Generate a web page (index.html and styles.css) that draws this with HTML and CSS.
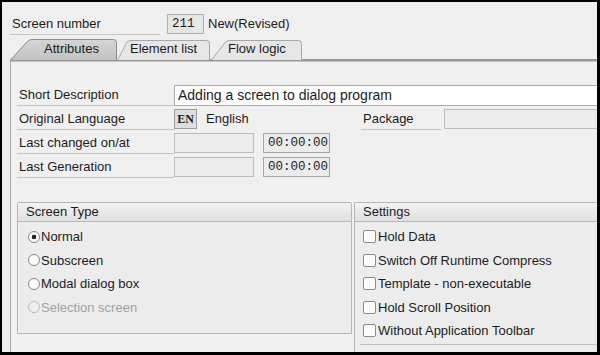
FILE: index.html
```html
<!DOCTYPE html>
<html lang="en">
<head>
  <meta charset="UTF-8" />
  <title>Screen Painter - Attributes</title>
  <link rel="stylesheet" href="styles.css">
</head>
<body>

  <div class="window">

    <div class="screen-row">
      <span class="line-label top-label">Screen number</span>
      <span class="code-box">211</span>
      <span class="status">New(Revised)</span>
    </div>

    <div class="tabs">
      <div class="tab tab-attr active">
        <svg class="tab-shape" viewBox="0 0 107 21" preserveAspectRatio="none">
          <defs>
            <linearGradient id="activeFill" x1="0" y1="0" x2="0" y2="1">
              <stop offset="0" stop-color="#d6d6d6"/>
              <stop offset="1" stop-color="#c2c2c2"/>
            </linearGradient>
          </defs>
          <path d="M0.5 21 L17.5 2.5 Q19 0.5 22 0.5 L103.5 0.5 Q106.5 0.5 106.5 3.5 L106.5 21" fill="url(#activeFill)" stroke="#8c8c8c"/>
        </svg>
        <span>Attributes</span>
      </div>
      <div class="tab tab-elem">
        <svg class="tab-shape" viewBox="0 0 93 21" preserveAspectRatio="none">
          <path d="M0.5 21 L10 3 Q11.5 1.5 14 1.5 L89.5 1.5 Q92.5 1.5 92.5 4.5 L92.5 21" fill="#e6e6e6" stroke="#a6a6a6"/>
        </svg>
        <span>Element list</span>
      </div>
      <div class="tab tab-flow">
        <svg class="tab-shape" viewBox="0 0 92 21" preserveAspectRatio="none">
          <path d="M1.5 21 L15.5 3 Q17 1.5 19.5 1.5 L88.5 1.5 Q91.5 1.5 91.5 4.5 L91.5 21" fill="#e6e6e6" stroke="#a6a6a6"/>
        </svg>
        <span>Flow logic</span>
      </div>
    </div>

    <div class="panel">

      <div class="form">
        <div class="form-row">
          <span class="line-label">Short Description</span>
          <span class="text-input">Adding a screen to dialog program</span>
        </div>
        <div class="form-row">
          <span class="line-label">Original Language</span>
          <span class="lang-box">EN</span>
          <span class="lang-name">English</span>
          <div class="package">
            <span class="line-label pkg-label">Package</span>
            <span class="empty-input pkg-input"></span>
          </div>
        </div>
        <div class="form-row">
          <span class="line-label">Last changed on/at</span>
          <span class="empty-input date-input"></span>
          <span class="time-box">00:00:00</span>
        </div>
        <div class="form-row">
          <span class="line-label">Last Generation</span>
          <span class="empty-input date-input"></span>
          <span class="time-box">00:00:00</span>
        </div>
      </div>

      <div class="groups">
        <div class="group screen-type">
          <div class="group-title">Screen Type</div>
          <ul class="options">
            <li><span class="radio checked"></span>Normal</li>
            <li><span class="radio"></span>Subscreen</li>
            <li><span class="radio"></span>Modal dialog box</li>
            <li class="disabled"><span class="radio"></span>Selection screen</li>
          </ul>
        </div>
        <div class="group settings">
          <div class="group-title">Settings</div>
          <ul class="options checks">
            <li><span class="check"></span>Hold Data</li>
            <li><span class="check"></span>Switch Off Runtime Compress</li>
            <li><span class="check"></span>Template - non-executable</li>
            <li><span class="check"></span>Hold Scroll Position</li>
            <li><span class="check"></span>Without Application Toolbar</li>
          </ul>
        </div>
      </div>

    </div>
  </div>

</body>
</html>
```

FILE: styles.css
```css
body {
  margin: 0;
  font-family: 'Liberation Sans', Arial, sans-serif;
  font-size: 13px;
  color: #1c1c1c;
  background: #fff;
}

.window {
  width: 600px;
  height: 355px;
  box-sizing: border-box;
  border: solid #000;
  border-width: 2px 3px 3px 2px;
  background: #efefef;
  overflow: hidden;
}

/* top line */
.screen-row {
  display: flex;
  align-items: flex-start;
  margin-top: 12px;
  padding-left: 8px;
  height: 21px;
}

.line-label {
  display: block;
  height: 20px;
  line-height: 20px;
  padding-left: 2px;
  border-bottom: 1px solid #c6c6c6;
  box-sizing: content-box;
  white-space: nowrap;
}

.top-label {
  width: 148px;
}

.code-box {
  margin-left: 7px;
  width: 35px;
  height: 18px;
  line-height: 18px;
  border: 1px solid #b0b0b0;
  background: #e6e6e6;
  font-family: 'Liberation Mono', monospace;
  font-size: 12.5px;
  padding-left: 4px;
  box-sizing: content-box;
  width: 31px;
}

.status {
  margin-left: 4px;
  line-height: 20px;
}

/* tabs */
.tabs {
  display: flex;
  margin-top: 4px;
  padding-left: 8px;
  height: 20px;
}

.tab {
  position: relative;
  height: 20px;
  line-height: 20px;
  white-space: nowrap;
}

.tab span {
  position: relative;
}

.tab-shape {
  position: absolute;
  left: 0;
  top: 0;
  width: 100%;
  height: 21px;
}

.tab-attr {
  width: 107px;
  padding-left: 34px;
  box-sizing: border-box;
  z-index: 2;
}

.tab-elem {
  width: 93px;
  padding-left: 13px;
  box-sizing: border-box;
}

.tab-flow {
  width: 92px;
  padding-left: 18px;
  box-sizing: border-box;
}

/* panel */
.panel {
  margin-left: 8px;
  height: 292px;
  border-top: 2px solid #979797;
  border-left: 1px solid #a8a8a8;
  background: #f0f0f0;
  box-shadow: inset 0 1px 0 #c4c4c4;
}

.form {
  display: flex;
  flex-direction: column;
  gap: 3px;
  padding: 24px 0 0 6px;
}

.form-row {
  display: flex;
  align-items: flex-start;
  height: 21px;
}

.form-row > .line-label {
  width: 155px;
}

.text-input {
  flex: 1;
  height: 19px;
  line-height: 19px;
  background: #fff;
  border: 1px solid #a9a9a9;
  border-right: none;
  padding-left: 3px;
  font-size: 14px;
  white-space: nowrap;
}

.lang-box {
  width: 21px;
  height: 18px;
  line-height: 18px;
  border: 1px solid #9c9c9c;
  background: #dedede;
  text-align: center;
  font-family: 'Liberation Serif', serif;
  font-weight: bold;
  font-size: 12px;
}

.lang-name {
  margin-left: 9px;
  line-height: 20px;
}

.package {
  display: flex;
  align-items: flex-start;
  margin-left: auto;
  width: 236px;
}

.pkg-label {
  width: 78px;
}

.empty-input {
  display: block;
  height: 18px;
  border: 1px solid #bcbcbc;
  background: #ececec;
}

.pkg-input {
  flex: 1;
  margin-left: 3px;
  border-right: none;
}

.date-input {
  width: 78px;
}

.time-box {
  margin-left: 9px;
  width: 61px;
  height: 18px;
  line-height: 18px;
  padding-left: 4px;
  border: 1px solid #a4a4a4;
  background: #ececec;
  font-family: 'Liberation Mono', monospace;
  font-size: 12.5px;
}

/* groups */
.groups {
  display: flex;
  gap: 2px;
  margin-top: 24px;
  padding-left: 6px;
}

.group {
  border: 1px solid #b6b6b6;
  border-radius: 2px 2px 0 0;
  background: #ececec;
}

.screen-type {
  width: 333px;
  height: 130px;
}

.settings {
  flex: 1;
  height: 160px;
  border-right: none;
  border-bottom: none;
}

.group-title {
  height: 18px;
  line-height: 18px;
  padding-left: 8px;
  background: linear-gradient(#f2f2f2, #e0e0e0);
  border-bottom: 1px solid #b8b8b8;
}

.options {
  list-style: none;
  margin: 0;
  padding: 3px 0 0 10px;
}

.options li {
  display: flex;
  align-items: center;
  height: 23.5px;
  white-space: nowrap;
}

.options li.disabled {
  color: #a2a2a2;
}

.radio {
  width: 10px;
  height: 10px;
  margin-right: 1px;
  border: 1px solid #8a8a8a;
  border-radius: 50%;
  background: #fafafa;
}

.radio.checked {
  background: radial-gradient(circle, #222 0 2px, #fafafa 2.6px);
}

.disabled .radio {
  border-color: #b8b8b8;
  background: #efefef;
}

.checks {
  margin-left: 5px;
  padding-left: 3px;
  padding-bottom: 1px;
  border-bottom: 1px solid #c2c2c2;
}

.check {
  width: 11px;
  height: 11px;
  margin-right: 2px;
  border: 1px solid #8a8a8a;
  border-radius: 2px;
  background: #fbfbfb;
}
```
